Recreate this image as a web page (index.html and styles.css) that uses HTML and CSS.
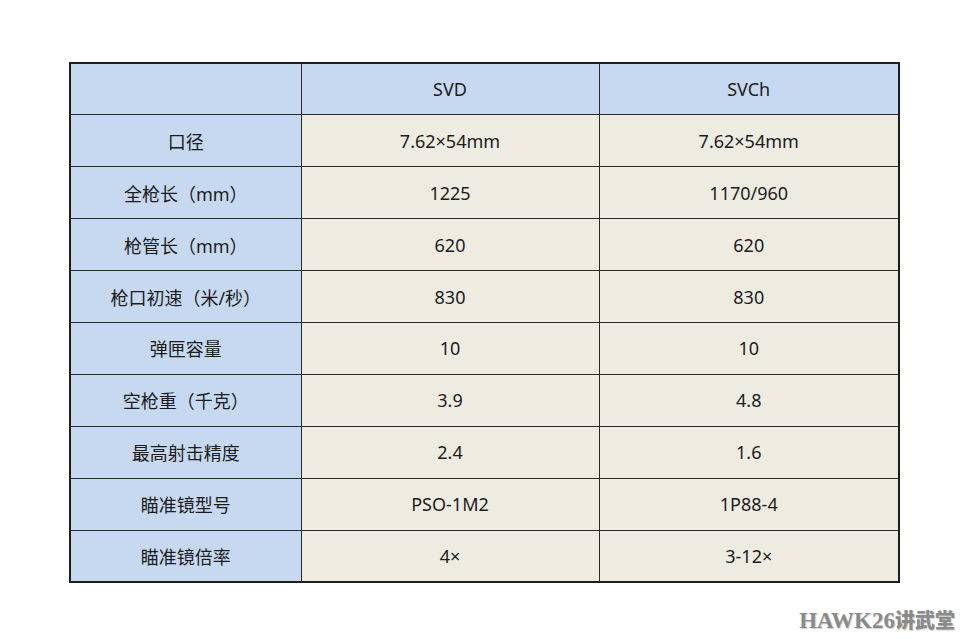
FILE: index.html
```html
<!DOCTYPE html>
<html lang="zh">
<head>
<meta charset="utf-8">
<link rel="stylesheet" href="styles.css">
</head>
<body>
<div class="page">
<table class="spec">
<colgroup><col class="c1"><col class="c2"><col class="c3"></colgroup>
<tr class="head"><th></th><th>SVD</th><th>SVCh</th></tr>
<tr><th>口径</th><td>7.62×54mm</td><td>7.62×54mm</td></tr>
<tr><th>全枪长（mm）</th><td>1225</td><td>1170/960</td></tr>
<tr><th>枪管长（mm）</th><td>620</td><td>620</td></tr>
<tr><th>枪口初速（米/秒）</th><td>830</td><td>830</td></tr>
<tr><th>弹匣容量</th><td>10</td><td>10</td></tr>
<tr><th>空枪重（千克）</th><td>3.9</td><td>4.8</td></tr>
<tr><th>最高射击精度</th><td>2.4</td><td>1.6</td></tr>
<tr><th>瞄准镜型号</th><td>PSO-1M2</td><td>1P88-4</td></tr>
<tr><th>瞄准镜倍率</th><td>4×</td><td>3-12×</td></tr>
</table>
<div class="mark">HAWK26<span class="cn">讲武堂</span></div>
</div>
</body>
</html>
```
FILE: styles.css
```css
html, body { margin: 0; padding: 0; background: #fff; }
.page {
  width: 960px; height: 639px; position: relative;
  padding: 62px 0 0 69px; box-sizing: border-box;
  font-family: "Noto Sans", "Noto Sans CJK SC", sans-serif;
}
.spec {
  border-collapse: collapse;
  border: 2px solid #1e1e1e;
  table-layout: fixed;
  width: 829px;
  height: 519px;
}
.c1 { width: 231px; }
.c2 { width: 298px; }
.c3 { width: 300px; }
.spec tr { height: 51.9px; }
.spec th, .spec td {
  border: 1px solid #2a2a2a;
  padding: 0;
  text-align: center;
  vertical-align: middle;
  font-size: 18px;
  font-weight: normal;
  color: #1c1c1c;
}
.spec th { background: #c6d9f1; }
.spec td { background: #eeece1; }
.mark {
  position: absolute; right: 5px; bottom: 5px;
  font-family: "Liberation Serif", "Noto Sans CJK SC", serif;
  font-weight: bold; font-size: 23px; color: #8a8a8a;
  letter-spacing: 0;
  text-shadow: 1px 1px 1px #d0d0d0;
}
.mark .cn { font-family: "Noto Sans CJK SC", sans-serif; font-size: 20px; font-weight: 900; }
```
